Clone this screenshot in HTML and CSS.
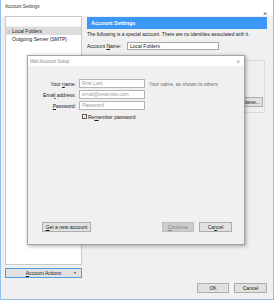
FILE: index.html
```html
<!DOCTYPE html>
<html>
<head>
<meta charset="utf-8">
<link rel="stylesheet" href="styles.css">
</head>
<body>
<div class="window">
  <div class="titlebar">
    <span class="title">Account Settings</span>
    <span class="close">×</span>
  </div>
  <div class="main">
    <div class="left">
      <div class="tree">
        <div class="tree-head"></div>
        <div class="row selected"><span class="twisty">›</span>Local Folders</div>
        <div class="row">Outgoing Server (SMTP)</div>
      </div>
      <div class="btn actions"><span><u>A</u>ccount Actions</span><span class="caret">▾</span></div>
    </div>
    <div class="right">
      <div class="header">Account Settings</div>
      <div class="desc">The following is a special account. There are no identities associated with it.</div>
      <div class="name-row">
        <span class="label">Account <u>N</u>ame:</span>
        <div class="field">Local Folders</div>
      </div>
      <div class="group">
        <div class="btn browse">Browse...</div>
      </div>
    </div>
  </div>
  <div class="footer">
    <div class="btn ok">OK</div>
    <div class="btn cancel">Cancel</div>
  </div>

  <div class="dialog">
    <div class="dlg-title">
      <span>Mail Account Setup</span>
      <span class="dlg-close">×</span>
    </div>
    <div class="dlg-body">
      <div class="form">
        <span class="flabel">Your <u>n</u>ame:</span>
        <div class="input placeholder">First Last</div>
        <span class="hint">Your name, as shown to others</span>

        <span class="flabel">Emai<u>l</u> address:</span>
        <div class="input placeholder">email@example.com</div>
        <span></span>

        <span class="flabel"><u>P</u>assword:</span>
        <div class="input placeholder">Password</div>
        <span></span>

        <span></span>
        <div class="check-row">
          <span class="checkbox">
            <svg viewBox="0 0 10 10" width="5" height="5"><path d="M2 5.2 L4.2 7.4 L8.2 2.6" fill="none" stroke="#333" stroke-width="1.3"/></svg>
          </span>
          <span>Re<u>m</u>ember password</span>
        </div>
        <span></span>
      </div>
      <div class="dlg-buttons">
        <div class="btn getnew"><span><u>G</u>et a new account</span></div>
        <div class="spacer"></div>
        <div class="btn disabled continue"><span><u>C</u>ontinue</span></div>
        <div class="btn dcancel"><span>Ca<u>n</u>cel</span></div>
      </div>
    </div>
  </div>
</div>
</body>
</html>
```
FILE: styles.css
```css
* { box-sizing: border-box; }
html, body {
  margin: 0;
  padding: 0;
  background: #ffffff;
}
body {
  font-family: "Liberation Sans", Arial, sans-serif;
  font-size: 5px;
  color: #1a1a1a;
}
u { text-decoration: underline; text-underline-offset: 0.5px; text-decoration-thickness: 0.4px; }

.window {
  position: relative;
  width: 274px;
  height: 300px;
  background: #f0f0f0;
  border: 1px solid #8fc0ee;
  border-top: none;
  display: flex;
  flex-direction: column;
}

.titlebar {
  height: 16px;
  background: #ffffff;
  display: flex;
  justify-content: space-between;
  align-items: flex-start;
  padding: 4px 6px 0 4px;
  line-height: 5px;
}
.title { font-size: 4.6px; color: #333; }
.close { font-size: 7px; color: #555; margin-top: 7px; line-height: 6px; }

.main {
  height: 262px;
  display: flex;
  gap: 5px;
  padding: 0 6px 0 4px;
}

.left {
  width: 77px;
  display: flex;
  flex-direction: column;
  gap: 3px;
}
.tree {
  flex: 1;
  background: #ffffff;
  border: 1px solid #c9c9c9;
}
.tree-head {
  height: 10px;
  border-bottom: 1px solid #efefef;
}
.row {
  height: 8px;
  line-height: 8px;
  padding-left: 6px;
  position: relative;
  color: #222;
}
.row.selected { background: #dcdcdc; }
.twisty {
  position: absolute;
  left: 2px;
  top: 0;
  color: #888;
  font-size: 5px;
}

.btn {
  height: 10px;
  background: #e1e1e1;
  border: 1px solid #adadad;
  display: flex;
  align-items: center;
  justify-content: center;
  color: #1a1a1a;
  line-height: 8px;
}
.btn.actions {
  border-color: #4f9ee6;
  position: relative;
}
.caret {
  position: absolute;
  right: 5px;
  font-size: 3.5px;
  color: #444;
}

.right {
  width: 180px;
  padding-top: 1px;
  display: flex;
  flex-direction: column;
}
.header {
  height: 12px;
  background: #3b98f7;
  color: #ffffff;
  font-weight: bold;
  font-size: 5.4px;
  line-height: 12px;
  padding-left: 4px;
}
.desc {
  margin-top: 2px;
  height: 8px;
  line-height: 8px;
  white-space: nowrap;
  font-size: 4.85px;
}
.name-row {
  margin-top: 3px;
  display: flex;
  align-items: center;
  gap: 4px;
}
.label { width: 36px; white-space: nowrap; }
.field {
  width: 92px;
  height: 8px;
  line-height: 7px;
  background: #ffffff;
  border: 1px solid #a8a8a8;
  padding-left: 2px;
}

.group {
  margin-top: 10px;
  margin-right: 2px;
  height: 53px;
  border: 1px solid #dadada;
  display: flex;
  justify-content: flex-end;
  align-items: flex-start;
  padding: 36px 1px 0 0;
}
.btn.browse { width: 27px; }

.footer {
  margin-top: 5px;
  height: 10px;
  display: flex;
  justify-content: flex-end;
  gap: 5px;
  padding-right: 6px;
}
.btn.ok { width: 32px; }
.btn.cancel { width: 33px; }

/* Overlay dialog */
.dialog {
  position: absolute;
  left: 26px;
  top: 55px;
  width: 218px;
  height: 190px;
  background: #f0f0f0;
  border: 1px solid #a3a3a3;
  box-shadow: 1px 1px 4px rgba(0, 0, 0, 0.35);
  display: flex;
  flex-direction: column;
}
.dlg-title {
  height: 10px;
  background: #ffffff;
  display: flex;
  justify-content: space-between;
  align-items: center;
  padding: 0 4px 0 2px;
  color: #8a8a8a;
  font-size: 4.6px;
}
.dlg-close { font-size: 6.5px; color: #9a9a9a; }

.dlg-body {
  flex: 1;
  display: flex;
  flex-direction: column;
  padding-top: 13px;
}
.form {
  display: grid;
  grid-template-columns: 48px 66px auto;
  column-gap: 3px;
  row-gap: 2px;
  grid-auto-rows: 9px;
  align-items: center;
}
.flabel {
  text-align: right;
  white-space: nowrap;
  color: #1a1a1a;
}
.input {
  height: 9px;
  background: #ffffff;
  border: 1px solid #b4b4b4;
  padding-left: 2px;
  line-height: 7px;
}
.placeholder { color: #9a9a9a; }
.hint {
  color: #6d6d6d;
  padding-left: 1px;
  white-space: nowrap;
}
.check-row {
  display: flex;
  align-items: center;
  gap: 1px;
  padding-left: 3px;
  white-space: nowrap;
}
.checkbox {
  width: 5px;
  height: 5px;
  border: 0.5px solid #555;
  background: #ffffff;
  display: flex;
  align-items: center;
  justify-content: center;
}
.checkbox svg { display: block; }

.dlg-buttons {
  margin-top: auto;
  display: flex;
  gap: 5px;
  padding: 0 12px 12px 14px;
}
.spacer { flex: 1; }
.btn.getnew { width: 49px; }
.btn.continue { width: 32px; }
.btn.dcancel { width: 33px; }
.btn.disabled {
  background: #cccccc;
  border-color: #bfbfbf;
  color: #838383;
}
```
